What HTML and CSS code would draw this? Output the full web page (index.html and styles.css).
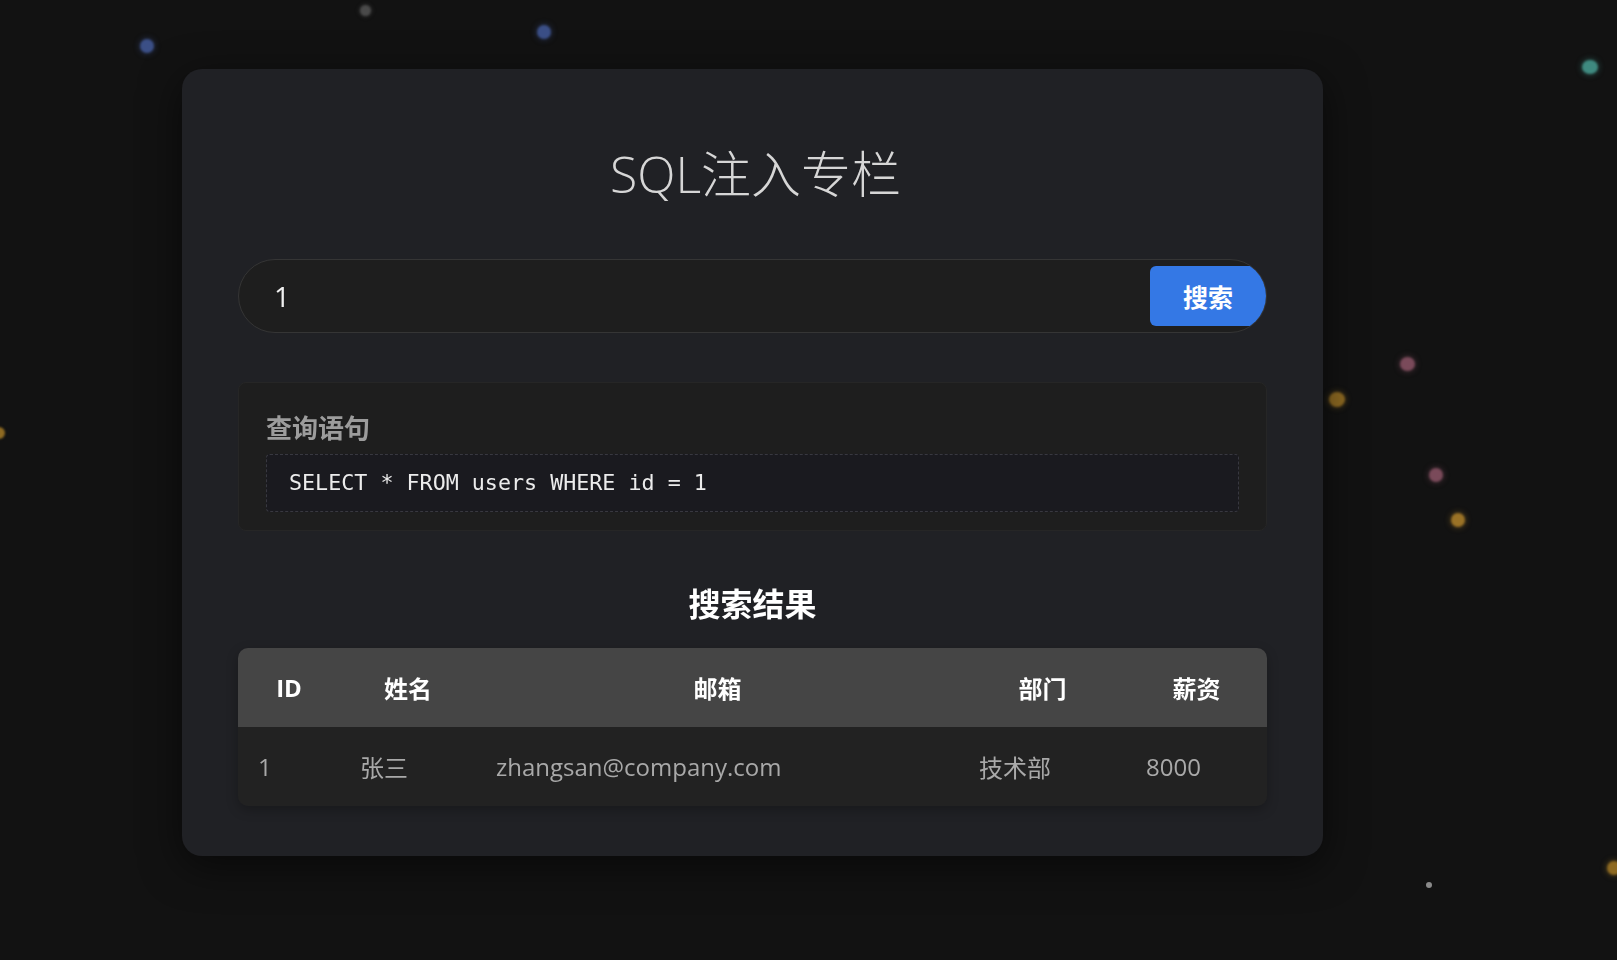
FILE: index.html
```html
<!DOCTYPE html>
<html lang="zh-CN">
<head>
<meta charset="utf-8">
<title>SQL注入专栏</title>
<link rel="stylesheet" href="styles.css">
</head>
<body>
<div class="particles">
  <span class="dot d1"></span>
  <span class="dot d2"></span>
  <span class="dot d3"></span>
  <span class="dot d4"></span>
  <span class="dot d5"></span>
  <span class="dot d6"></span>
  <span class="dot d7"></span>
  <span class="dot d8"></span>
  <span class="dot d9"></span>
  <span class="dot d10"></span>
  <span class="dot d11"></span>
</div>
<main class="card">
  <h1 class="title">SQL注入专栏</h1>
  <form class="search">
    <input class="search-input" type="text" value="1">
    <button class="search-btn" type="button">搜索</button>
  </form>
  <section class="query">
    <h3 class="query-label">查询语句</h3>
    <div class="query-code">SELECT * FROM users WHERE id = 1</div>
  </section>
  <h2 class="results-title">搜索结果</h2>
  <div class="table-wrap">
    <table class="results">
      <colgroup>
        <col class="c-id"><col class="c-name"><col class="c-mail"><col class="c-dept"><col class="c-pay">
      </colgroup>
      <thead>
        <tr><th>ID</th><th>姓名</th><th>邮箱</th><th>部门</th><th>薪资</th></tr>
      </thead>
      <tbody>
        <tr><td>1</td><td>张三</td><td>zhangsan@company.com</td><td>技术部</td><td>8000</td></tr>
      </tbody>
    </table>
  </div>
</main>
</body>
</html>
```
FILE: styles.css
```css
* { box-sizing: border-box; }
html, body { margin: 0; padding: 0; }
body {
  background: #121212;
  min-height: 960px;
  font-family: "Open Sans", "Noto Sans CJK SC", sans-serif;
  color: #ddd;
  overflow: hidden;
  padding-top: 69px;
}
.particles { position: fixed; inset: 0; pointer-events: none; }
.dot { position: absolute; border-radius: 50%; width: 14px; height: 14px; filter: blur(1px); }
.d1 { left: 140px; top: 39px; background: #3b4f86; box-shadow: 0 0 6px rgba(59,79,134,.6); }
.d2 { left: 360px; top: 5px; width: 11px; height: 11px; background: #4a4a4a; box-shadow: 0 0 4px rgba(90,90,90,.5); }
.d3 { left: 537px; top: 25px; background: #3b4f86; box-shadow: 0 0 6px rgba(59,79,134,.6); }
.d4 { left: 1582px; top: 60px; width: 16px; background: #3f8a80; box-shadow: 0 0 6px rgba(63,138,128,.6); }
.d5 { left: 1400px; top: 357px; width: 15px; background: #7a4a5a; box-shadow: 0 0 6px rgba(122,74,90,.6); }
.d6 { left: 1329px; top: 392px; width: 16px; height: 15px; background: #8e6a22; box-shadow: 0 0 6px rgba(142,106,34,.6); }
.d7 { left: 1429px; top: 468px; background: #7a4a5a; box-shadow: 0 0 6px rgba(122,74,90,.6); }
.d8 { left: 1451px; top: 513px; background: #9a7226; box-shadow: 0 0 6px rgba(154,114,38,.6); }
.d9 { left: 1426px; top: 882px; width: 6px; height: 6px; background: #8a8a8a; filter: none; }
.d10 { left: 1607px; top: 861px; background: #8e6a22; box-shadow: 0 0 6px rgba(142,106,34,.6); }
.d11 { left: -7px; top: 427px; width: 12px; height: 12px; background: #8e6a22; }

.card {
  position: relative;
  width: 1141px;
  margin-left: 182px;
  background: #202125;
  border-radius: 20px;
  padding: 56px 56px 50px;
  box-shadow: 0 10px 40px rgba(0,0,0,.55);
}
.title {
  margin: 20px 0 56px;
  padding-left: 6px;
  text-align: center;
  font-weight: 300;
  font-size: 50px;
  line-height: 58px;
  color: #d6d6d6;
  font-family: "Open Sans", "Noto Sans CJK SC", sans-serif;
}
.search {
  display: flex;
  align-items: center;
  height: 74px;
  margin: 0;
  background: #1e1e1e;
  border: 1px solid #353535;
  border-radius: 37px;
  overflow: hidden;
}
.search-input {
  flex: 1;
  min-width: 0;
  height: 100%;
  background: transparent;
  border: none;
  outline: none;
  color: #f0f0f0;
  font-family: "Open Sans", "Noto Sans CJK SC", sans-serif;
  font-size: 28px;
  padding: 0 0 0 35px;
}
.search-btn {
  width: 116px;
  height: 60px;
  border: none;
  border-radius: 6px 0 0 6px;
  background: #3478e5;
  color: #fff;
  font-family: "Noto Sans CJK SC", sans-serif;
  font-weight: 700;
  font-size: 25px;
  padding: 0;
  letter-spacing: 0;
}
.query {
  margin-top: 49px;
  background: #1e1e1e;
  border: 1px solid #262626;
  border-radius: 8px;
  padding: 27px 27px 18px;
}
.query-label {
  margin: 0 0 10px;
  font-family: "Noto Sans CJK SC", sans-serif;
  font-size: 26px;
  line-height: 34px;
  font-weight: 700;
  color: #9c9c9c;
}
.query-code {
  background: #1a1a1f;
  border: 1px dashed #383840;
  border-radius: 4px;
  padding: 15px 22px;
  font-family: "DejaVu Sans Mono", "Liberation Mono", monospace;
  font-size: 21.7px;
  line-height: 26px;
  color: #ececec;
}
.results-title {
  margin: 51px 0 26px;
  text-align: center;
  font-family: "Noto Sans CJK SC", sans-serif;
  font-size: 32px;
  line-height: 40px;
  font-weight: 700;
  color: #fff;
}
.table-wrap {
  border-radius: 10px;
  overflow: hidden;
  box-shadow: 0 4px 12px rgba(0,0,0,.25);
}
.results {
  width: 100%;
  border-collapse: collapse;
  table-layout: fixed;
}
.c-id { width: 102px; }
.c-name { width: 136px; }
.c-mail { width: 483px; }
.c-dept { width: 167px; }
.c-pay { width: 141px; }
.results th {
  background: #454545;
  height: 79px;
  color: #fff;
  font-size: 24px;
  font-weight: 700;
  text-align: center;
  padding: 0 20px;
}
.results td {
  background: #222222;
  height: 79px;
  color: #a9a9a9;
  font-size: 24px;
  font-weight: 400;
  text-align: left;
  padding: 0 20px;
  white-space: nowrap;
}
```
